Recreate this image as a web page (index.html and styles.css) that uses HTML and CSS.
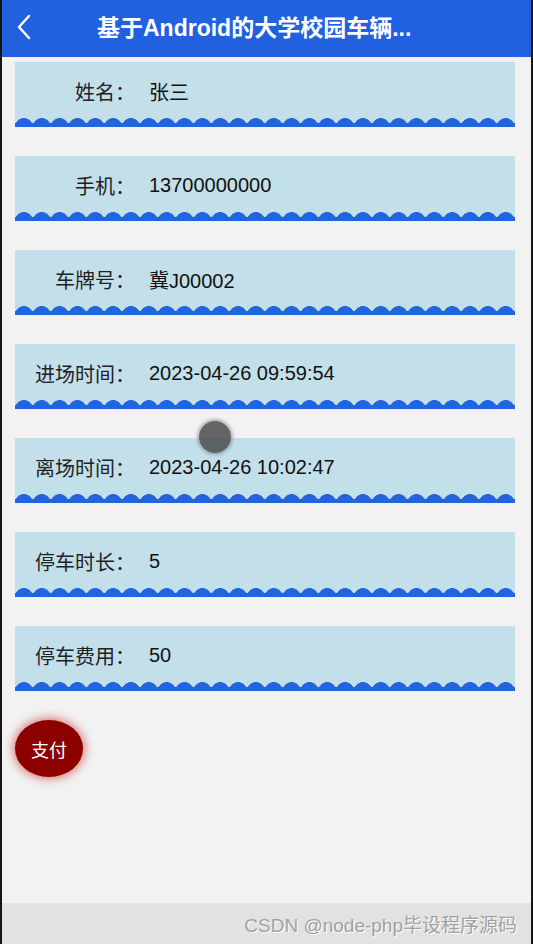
FILE: index.html
```html
<!DOCTYPE html>
<html lang="zh">
<head>
<meta charset="utf-8">
<link rel="stylesheet" href="styles.css">
</head>
<body>
<div class="screen">
  <header class="topbar">
    <svg class="back" width="16" height="26" viewBox="0 0 16 26"><path d="M13 2 L3 13 L13 24" fill="none" stroke="#fff" stroke-width="2.4" stroke-linecap="round" stroke-linejoin="round"/></svg>
    <div class="title">基于Android的大学校园车辆...</div>
  </header>
  <main class="content">
    <div class="card"><span class="label">姓名：</span><span class="value">张三</span></div>
    <div class="card"><span class="label">手机：</span><span class="value">13700000000</span></div>
    <div class="card"><span class="label">车牌号：</span><span class="value">冀J00002</span></div>
    <div class="card"><span class="label">进场时间：</span><span class="value">2023-04-26 09:59:54</span></div>
    <div class="card"><span class="label">离场时间：</span><span class="value">2023-04-26 10:02:47</span></div>
    <div class="card"><span class="label">停车时长：</span><span class="value">5</span></div>
    <div class="card"><span class="label">停车费用：</span><span class="value">50</span></div>
    <div class="pay">支付</div>
  </main>
  <footer class="footer">CSDN @node-php毕设程序源码</footer>
  <div class="touch"></div>
</div>
</body>
</html>
```
FILE: styles.css
```css
html, body {
  margin: 0;
  padding: 0;
}
body {
  width: 533px;
  height: 944px;
  overflow: hidden;
  font-family: "Liberation Sans", "Noto Sans CJK SC", sans-serif;
}
.screen {
  position: relative;
  height: 944px;
  box-sizing: border-box;
  border-left: 2px solid #151515;
  border-right: 2px solid #151515;
  background: #f2f2f2;
  display: flex;
  flex-direction: column;
}
.topbar {
  height: 57px;
  background: #2161df;
  display: flex;
  align-items: center;
  flex-shrink: 0;
}
.back {
  margin-left: 14px;
  margin-top: -4px;
}
.title {
  margin-left: 65px;
  margin-top: -6px;
  color: #fff;
  font-weight: bold;
  font-size: 23px;
  letter-spacing: 0;
}
.content {
  flex: 1;
  padding: 5px 16px 0 13px;
  display: flex;
  flex-direction: column;
  gap: 29px;
}
.card {
  height: 65px;
  box-sizing: border-box;
  padding-bottom: 7px;
  display: flex;
  align-items: center;
  background:
    radial-gradient(circle at 50% 100%, #2163e0 8.6px, rgba(33,99,224,0) 9.2px) left bottom / 17.857px 9px repeat-x,
    linear-gradient(#2163e0, #2163e0) left bottom / 100% 4px no-repeat,
    #c3dfea;
  font-size: 20px;
  color: #111;
}
.label {
  width: 120px;
  text-align: right;
  font-family: "Noto Sans CJK SC", sans-serif;
  font-size: 20px;
  color: #222;
}
.value {
  margin-left: 14px;
}
.pay {
  width: 68px;
  height: 57px;
  border-radius: 50%;
  background: #8c0000;
  box-shadow: 0 0 10px 2px rgba(200, 20, 20, 0.55);
  color: #fff;
  font-family: "Noto Sans CJK SC", sans-serif;
  font-size: 18px;
  display: flex;
  align-items: center;
  justify-content: center;
}
.footer {
  height: 41px;
  flex-shrink: 0;
  background: #e2e2e2;
  color: #a0a0a0;
  text-shadow: 1px 1px 0 #fff;
  font-size: 19px;
  display: flex;
  align-items: center;
  justify-content: flex-end;
  padding-right: 14px;
}
.touch {
  position: absolute;
  left: 197px;
  top: 421px;
  width: 32px;
  height: 32px;
  border-radius: 50%;
  background: rgba(70, 70, 70, 0.82);
  box-shadow: 0 0 3px 2px rgba(120, 120, 120, 0.5);
}
```
